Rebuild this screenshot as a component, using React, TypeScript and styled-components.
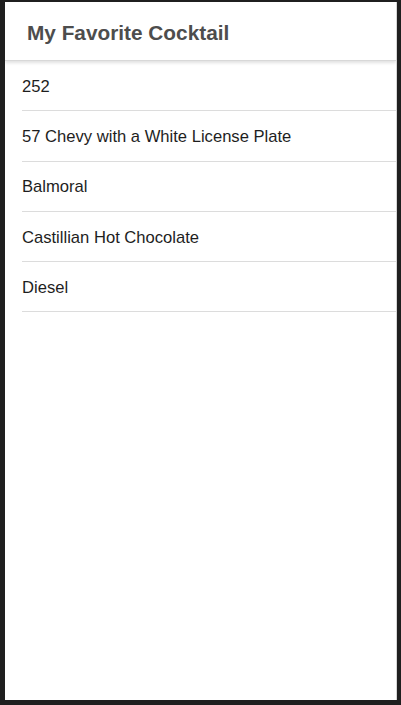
import React from "react";
import styled, { createGlobalStyle } from "styled-components";

const Global = createGlobalStyle`
  html, body {
    margin: 0;
    padding: 0;
    background: #1f1f1f;
  }
  body {
    font-family: "Liberation Sans", Arial, Helvetica, sans-serif;
  }
  * { box-sizing: border-box; }
`;

const Frame = styled.div`
  width: 401px;
  height: 705px;
  padding: 2px 4px 5px 5px;
  background: #1f1f1f;
`;

const Screen = styled.div`
  height: 100%;
  background: #ffffff;
  border-right: 1px solid #d6d6d6;
  display: flex;
  flex-direction: column;
  overflow: hidden;
`;

const Header = styled.header`
  height: 59px;
  flex: none;
  display: flex;
  align-items: center;
  padding: 3px 0 0 22px;
  background: #fff;
  border-bottom: 1px solid #d8d8d8;
  box-shadow: 0 2px 3px rgba(0, 0, 0, 0.12);
  position: relative;
  z-index: 1;
`;

const Title = styled.h1`
  margin: 0;
  font-size: 20.8px;
  font-weight: 700;
  color: #4d4d4d;
  letter-spacing: 0;
`;

const List = styled.ul`
  list-style: none;
  margin: 0;
  padding: 0 0 0 17px;
`;

const Item = styled.li`
  height: 50.3px;
  display: flex;
  align-items: center;
  padding-top: 2px;
  font-size: 16.6px;
  color: #1e1e1e;
  border-bottom: 1px solid #dcdcdc;
`;

const cocktails = [
  "252",
  "57 Chevy with a White License Plate",
  "Balmoral",
  "Castillian Hot Chocolate",
  "Diesel",
];

export default function App() {
  return (
    <>
      <Global />
      <Frame>
        <Screen>
          <Header>
            <Title>My Favorite Cocktail</Title>
          </Header>
          <List>
            {cocktails.map((c) => (
              <Item key={c}>{c}</Item>
            ))}
          </List>
        </Screen>
      </Frame>
    </>
  );
}
